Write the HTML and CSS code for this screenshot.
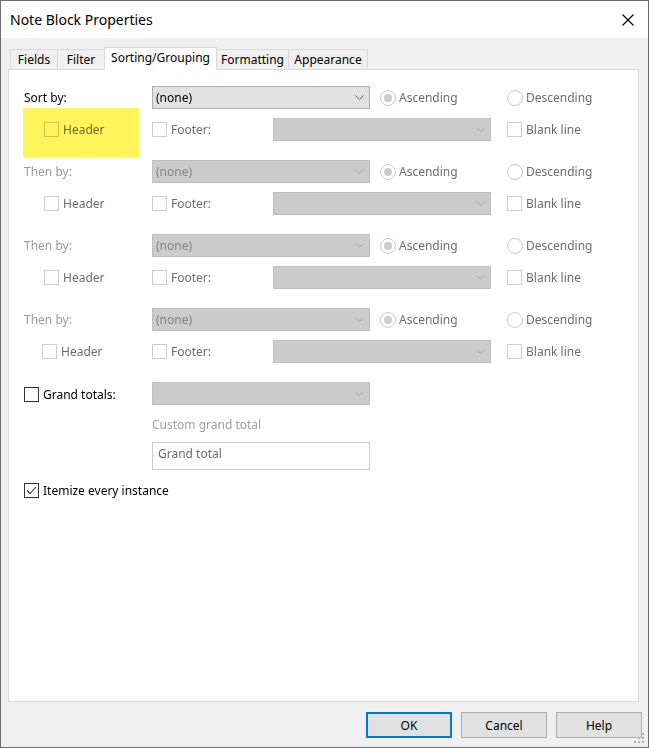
FILE: index.html
```html
<!DOCTYPE html>
<html>
<head>
<meta charset="utf-8">
<link rel="stylesheet" href="styles.css">
</head>
<body>
<div class="window">
  <div class="titlebar">
    <span class="title">Note Block Properties</span>
    <svg class="close" width="12" height="12" viewBox="0 0 12 12"><path d="M0.5 0.5 L11.5 11.5 M11.5 0.5 L0.5 11.5" stroke="#000" stroke-width="1.1" fill="none"/></svg>
  </div>
  <div class="tabs">
    <div class="tab t-fields">Fields</div>
    <div class="tab t-filter">Filter</div>
    <div class="tab t-sort active">Sorting/Grouping</div>
    <div class="tab t-format">Formatting</div>
    <div class="tab t-appear">Appearance</div>
  </div>
  <div class="panel">
    <div class="group first">
      <span class="lbl c-label">Sort by:</span>
      <div class="select c-sel"><span>(none)</span><svg class="chev" width="9" height="5" viewBox="0 0 9 5"><polyline points="0.5,0.5 4.5,4.5 8.5,0.5" fill="none" stroke="#606060"/></svg></div>
      <label class="opt c-asc"><span class="radio on"></span>Ascending</label>
      <label class="opt c-desc"><span class="radio"></span>Descending</label>
      <label class="opt c-head"><span class="box"></span>Header</label>
      <label class="opt c-foot"><span class="box"></span>Footer:</label>
      <div class="select dis c-fsel"><span></span><svg class="chev" width="9" height="5" viewBox="0 0 9 5"><polyline points="0.5,0.5 4.5,4.5 8.5,0.5" fill="none" stroke="#ababab"/></svg></div>
      <label class="opt c-blank"><span class="box"></span>Blank line</label>
      <div class="highlight"></div>
    </div>
    <div class="group">
      <span class="lbl dim c-label">Then by:</span>
      <div class="select dis c-sel"><span>(none)</span><svg class="chev" width="9" height="5" viewBox="0 0 9 5"><polyline points="0.5,0.5 4.5,4.5 8.5,0.5" fill="none" stroke="#ababab"/></svg></div>
      <label class="opt c-asc"><span class="radio on"></span>Ascending</label>
      <label class="opt c-desc"><span class="radio"></span>Descending</label>
      <label class="opt c-head"><span class="box"></span>Header</label>
      <label class="opt c-foot"><span class="box"></span>Footer:</label>
      <div class="select dis c-fsel"><span></span><svg class="chev" width="9" height="5" viewBox="0 0 9 5"><polyline points="0.5,0.5 4.5,4.5 8.5,0.5" fill="none" stroke="#ababab"/></svg></div>
      <label class="opt c-blank"><span class="box"></span>Blank line</label>
    </div>
    <div class="group">
      <span class="lbl dim c-label">Then by:</span>
      <div class="select dis c-sel"><span>(none)</span><svg class="chev" width="9" height="5" viewBox="0 0 9 5"><polyline points="0.5,0.5 4.5,4.5 8.5,0.5" fill="none" stroke="#ababab"/></svg></div>
      <label class="opt c-asc"><span class="radio on"></span>Ascending</label>
      <label class="opt c-desc"><span class="radio"></span>Descending</label>
      <label class="opt c-head"><span class="box"></span>Header</label>
      <label class="opt c-foot"><span class="box"></span>Footer:</label>
      <div class="select dis c-fsel"><span></span><svg class="chev" width="9" height="5" viewBox="0 0 9 5"><polyline points="0.5,0.5 4.5,4.5 8.5,0.5" fill="none" stroke="#ababab"/></svg></div>
      <label class="opt c-blank"><span class="box"></span>Blank line</label>
    </div>
    <div class="group">
      <span class="lbl dim c-label">Then by:</span>
      <div class="select dis c-sel"><span>(none)</span><svg class="chev" width="9" height="5" viewBox="0 0 9 5"><polyline points="0.5,0.5 4.5,4.5 8.5,0.5" fill="none" stroke="#ababab"/></svg></div>
      <label class="opt c-asc"><span class="radio on"></span>Ascending</label>
      <label class="opt c-desc"><span class="radio"></span>Descending</label>
      <label class="opt c-head shift"><span class="box"></span>Header</label>
      <label class="opt c-foot"><span class="box"></span>Footer:</label>
      <div class="select dis c-fsel"><span></span><svg class="chev" width="9" height="5" viewBox="0 0 9 5"><polyline points="0.5,0.5 4.5,4.5 8.5,0.5" fill="none" stroke="#ababab"/></svg></div>
      <label class="opt c-blank"><span class="box"></span>Blank line</label>
    </div>
    <div class="totals">
      <label class="opt en t-check"><span class="box en"></span>Grand totals:</label>
      <div class="select dis t-sel"><span></span><svg class="chev" width="9" height="5" viewBox="0 0 9 5"><polyline points="0.5,0.5 4.5,4.5 8.5,0.5" fill="none" stroke="#ababab"/></svg></div>
      <span class="custom t-custom">Custom grand total</span>
      <div class="textbox t-input">Grand total</div>
      <label class="opt en t-item"><span class="box en"><svg width="13" height="13" viewBox="0 0 13 13"><polyline points="2,6.5 5,9.5 11,3" fill="none" stroke="#333" stroke-width="1.1"/></svg></span>Itemize every instance</label>
    </div>
  </div>
  <div class="buttons">
    <div class="btn default">OK</div>
    <div class="btn">Cancel</div>
    <div class="btn">Help</div>
  </div>
  <svg class="grip" width="12" height="12" viewBox="0 0 12 12">
    <rect x="8" y="0" width="2" height="2" fill="#b4b4b4"/>
    <rect x="4" y="4" width="2" height="2" fill="#b4b4b4"/>
    <rect x="8" y="4" width="2" height="2" fill="#b4b4b4"/>
    <rect x="0" y="8" width="2" height="2" fill="#b4b4b4"/>
    <rect x="4" y="8" width="2" height="2" fill="#b4b4b4"/>
    <rect x="8" y="8" width="2" height="2" fill="#b4b4b4"/>
  </svg>
</div>
</body>
</html>
```
FILE: styles.css
```css
* { box-sizing: border-box; }
html, body { margin: 0; padding: 0; }
body {
  width: 649px;
  height: 748px;
  background: #f0f0f0;
  font-family: "Noto Sans", "Open Sans", sans-serif;
  font-size: 12px;
  color: #000;
}
.window {
  position: relative;
  width: 649px;
  height: 748px;
  border: 1px solid #6b6b6b;
  background: #f0f0f0;
  display: flex;
  flex-direction: column;
}
.titlebar {
  flex: none;
  height: 37px;
  background: #fff;
  display: flex;
  align-items: center;
  justify-content: space-between;
  padding: 0 14px 0 9px;
}
.title { font-size: 14px; color: #000; }
.close { display: block; margin-top: 1px; }

.tabs {
  position: relative;
  z-index: 2;
  flex: none;
  display: flex;
  align-items: flex-end;
  height: 22px;
  margin: 9px 0 0 9px;
}
.tab {
  height: 20px;
  margin-left: -1px;
  border: 1px solid #d9d9d9;
  border-bottom: none;
  background: #f0f0f0;
  display: flex;
  align-items: center;
  justify-content: center;
  line-height: 1;
}
.tab:first-child { margin-left: 0; }
.tab.active {
  height: 23px;
  margin-bottom: -1px;
  background: #fff;
  padding-bottom: 3px;
}
.t-fields { width: 48px; }
.t-filter { width: 48px; }
.t-sort { width: 113px; }
.t-format { width: 73px; }
.t-appear { width: 80px; }

.panel {
  flex: none;
  position: relative;
  z-index: 1;
  width: 631px;
  height: 633px;
  margin: 0 9px 0 7px;
  background: #fff;
  border: 1px solid #d9d9d9;
  padding: 16px 0 0 15px;
}

.group, .totals {
  display: grid;
  grid-template-columns: 20px 108px 121px 97px 10px 111px 16px 1fr;
}
.group {
  position: relative;
  grid-template-rows: 23px 23px;
  row-gap: 9px;
  margin-bottom: 19px;
  align-items: center;
}
.c-label { grid-column: 1 / 3; grid-row: 1; }
.c-sel { grid-column: 3 / 5; grid-row: 1; }
.c-asc { grid-column: 6 / 8; grid-row: 1; }
.c-desc { grid-column: 8; grid-row: 1; }
.c-head { grid-column: 2; grid-row: 2; }
.c-foot { grid-column: 3; grid-row: 2; }
.c-fsel { grid-column: 4 / 7; grid-row: 2; }
.c-blank { grid-column: 8; grid-row: 2; }
.shift { margin-left: -2px; }

.lbl { color: #000; }
.lbl.dim { color: #999; }

.select {
  height: 23px;
  border: 1px solid #adadad;
  background: #e1e1e1;
  display: flex;
  align-items: center;
  justify-content: space-between;
  padding: 0 5px 0 3px;
  color: #000;
}
.select.dis {
  background: #cccccc;
  border-color: #bfbfbf;
  color: #838383;
}
.chev { display: block; flex: none; }

.opt {
  display: flex;
  align-items: center;
  gap: 4px;
  color: #6d6d6d;
  white-space: nowrap;
}
.opt.en { color: #000; }
.box {
  flex: none;
  width: 15px;
  height: 15px;
  border: 1px solid #cccccc;
  background: #fff;
  display: flex;
  align-items: center;
  justify-content: center;
}
.box.en { border-color: #333; }
.box svg { display: block; }
.radio {
  flex: none;
  width: 16px;
  height: 16px;
  border: 1px solid #cccccc;
  border-radius: 50%;
  background: #fff;
  margin-right: -1px;
  display: flex;
  align-items: center;
  justify-content: center;
}
.radio.on::after {
  content: "";
  width: 8px;
  height: 8px;
  border-radius: 50%;
  background: #cccccc;
}

.highlight {
  position: absolute;
  left: -1px;
  top: 22px;
  width: 116px;
  height: 49px;
  background: #fff55a;
  mix-blend-mode: multiply;
  pointer-events: none;
}

.totals {
  margin-top: 3px;
  grid-template-rows: 23px 29px 36px 29px;
}
.t-check { grid-column: 1 / 3; grid-row: 1; align-self: center; padding-top: 1px; }
.t-sel { grid-column: 3 / 5; grid-row: 1; }
.t-custom { grid-column: 3 / 6; grid-row: 2; align-self: end; line-height: 18px; color: #a0a0a0; }
.t-input { grid-column: 3 / 5; grid-row: 3; align-self: end; }
.t-item { grid-column: 1 / 4; grid-row: 4; align-self: end; }

.textbox {
  height: 28px;
  border: 1px solid #cccccc;
  background: #fff;
  padding: 2px 5px;
  color: #6d6d6d;
  line-height: 18px;
}

.buttons {
  flex: none;
  display: flex;
  justify-content: flex-end;
  gap: 9px;
  margin-top: 10px;
  padding-right: 6px;
}
.btn {
  width: 86px;
  height: 26px;
  border: 1px solid #adadad;
  background: #e1e1e1;
  display: flex;
  align-items: center;
  justify-content: center;
  color: #000;
}
.btn.default { border: 2px solid #0078d7; }

.grip {
  position: absolute;
  right: 2px;
  bottom: 2px;
  display: block;
}
```
